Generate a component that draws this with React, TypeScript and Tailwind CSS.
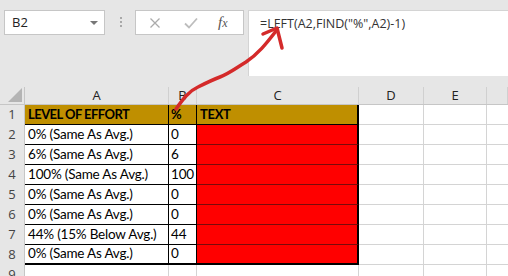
import React from "react";

const rows: { n: number; a: string; b: string }[] = [
  { n: 2, a: "0% (Same As Avg.)", b: "0" },
  { n: 3, a: "6% (Same As Avg.)", b: "6" },
  { n: 4, a: "100% (Same As Avg.)", b: "100" },
  { n: 5, a: "0% (Same As Avg.)", b: "0" },
  { n: 6, a: "0% (Same As Avg.)", b: "0" },
  { n: 7, a: "44% (15% Below Avg.)", b: "44" },
  { n: 8, a: "0% (Same As Avg.)", b: "0" },
];

const cellFont = { fontFamily: "Lato, 'Liberation Sans', sans-serif" };

function RowHeader({ n }: { n: number | string }) {
  return (
    <div
      className="w-[25px] h-[20px] shrink-0 flex items-center justify-center text-[13px] text-[#444] border-r border-[#c6c6c6]"
      style={{ fontFamily: "'Open Sans', sans-serif" }}
    >
      {n}
    </div>
  );
}

export default function App() {
  return (
    <div className="relative w-[508px] h-[276px] overflow-hidden bg-[#e6e6e6]">
      {/* toolbar */}
      <div className="flex items-start h-[87px] pt-[10px]">
        <div
          className="ml-[4px] w-[101px] h-[25px] bg-white border border-[#c6c6c6] flex items-center justify-between pl-[7px] pr-[6px] text-[13px] text-[#222]"
          style={{ fontFamily: "'Open Sans', sans-serif" }}
        >
          <span>B2</span>
          <span className="w-0 h-0 border-l-[4px] border-r-[4px] border-t-[4px] border-l-transparent border-r-transparent border-t-[#777]" />
        </div>
        <div className="ml-[15px] mt-[7px] flex flex-col gap-[2px]">
          <span className="w-[2px] h-[2px] bg-[#a8a8a8]" />
          <span className="w-[2px] h-[2px] bg-[#a8a8a8]" />
          <span className="w-[2px] h-[2px] bg-[#a8a8a8]" />
        </div>
        <div className="ml-[13px] w-[109px] h-[25px] bg-white border border-[#c6c6c6] flex items-center">
          <svg width="12" height="12" viewBox="0 0 12 12" className="ml-[13px]">
            <path d="M1.5 1.5 L10.5 10.5 M10.5 1.5 L1.5 10.5" stroke="#ababab" strokeWidth="1.3" fill="none" />
          </svg>
          <svg width="14" height="12" viewBox="0 0 14 12" className="ml-[23px]">
            <path d="M1 6.5 L5 10.5 L13 1.5" stroke="#bdbdbd" strokeWidth="1.8" fill="none" />
          </svg>
          <span
            className="ml-[20px] italic text-[15px] text-[#555] leading-none"
            style={{ fontFamily: "'Liberation Serif', serif" }}
          >
            f<span className="text-[12px]">x</span>
          </span>
        </div>
        <div
          className="ml-[4px] flex-1 h-[66px] bg-white border-l border-t border-[#d4d4d4] pl-[11px] pt-[4px] text-[12.5px] text-[#333]"
          style={{ fontFamily: "'Open Sans', sans-serif" }}
        >
          =LEFT(A2,FIND("%",A2)-1)
        </div>
      </div>

      {/* column headers */}
      <div className="flex h-[18px] border-b border-[#c6c6c6]" style={{ fontFamily: "'Open Sans', sans-serif" }}>
        <div className="w-[25px] shrink-0 border-r border-[#c6c6c6] flex items-end justify-end pr-[2px] pb-[2px]">
          <svg width="14" height="14" viewBox="0 0 14 14">
            <polygon points="14,0 14,14 0,14" fill="#b4b4b4" />
          </svg>
        </div>
        {[
          ["A", "w-[144px]"],
          ["B", "w-[28px]"],
          ["C", "w-[162px]"],
          ["D", "w-[65px]"],
          ["E", "w-[63px]"],
          ["", "w-[21px]"],
        ].map(([l, w], i) => (
          <div
            key={i}
            className={`${w} shrink-0 border-r border-[#d0d0d0] flex items-center justify-center text-[13px] text-[#222]`}
          >
            {l}
          </div>
        ))}
      </div>

      {/* row 1 */}
      <div className="flex h-[20px]">
        <RowHeader n={1} />
        <div className="flex bg-white" style={cellFont}>
          <div className="w-[144px] h-[20px] bg-[#bf8f00] border-r border-b border-black flex items-end pl-[3px] pb-[1px] font-bold text-[13px] tracking-[-0.55px] text-black leading-[17px] whitespace-nowrap">
            LEVEL OF EFFORT
          </div>
          <div className="w-[28px] h-[20px] bg-[#bf8f00] border-r border-b border-black flex items-end pl-[2px] pb-[1px] font-bold text-[13px] text-black leading-[17px]">
            %
          </div>
          <div className="w-[162px] h-[20px] bg-[#bf8f00] border-r-2 border-b border-black flex items-end pl-[3px] pb-[1px] font-bold text-[13px] tracking-[-0.3px] text-black leading-[17px]">
            TEXT
          </div>
          <div className="w-[65px] h-[20px] border-r border-b border-[#d4d4d4]" />
          <div className="w-[63px] h-[20px] border-r border-b border-[#d4d4d4]" />
          <div className="w-[21px] h-[20px] border-b border-[#d4d4d4]" />
        </div>
      </div>

      {rows.map((r) => {
        const last = r.n === 8;
        const hb = last ? "border-b-2" : "border-b";
        return (
          <div key={r.n} className="flex h-[20px]">
            <RowHeader n={r.n} />
            <div className="flex bg-white" style={cellFont}>
              <div className={`w-[144px] h-[20px] border-r ${hb} border-black flex items-end pl-[3px] pb-[1px] text-[13.5px] tracking-[-0.2px] text-black leading-[17px] whitespace-nowrap`}>
                {r.a}
              </div>
              <div className={`w-[28px] h-[20px] border-r ${hb} border-black flex items-end pl-[2px] pb-[1px] text-[13.5px] tracking-[-0.2px] text-black leading-[17px] whitespace-nowrap`}>
                {r.b}
              </div>
              <div
                className={`w-[162px] h-[20px] bg-[#ff0000] border-r-2 border-r-black ${hb} ${last ? "border-b-black" : "border-b-[#7a0a0a]"}`}
              />
              <div className="w-[65px] h-[20px] border-r border-b border-[#d4d4d4]" />
              <div className="w-[63px] h-[20px] border-r border-b border-[#d4d4d4]" />
              <div className="w-[21px] h-[20px] border-b border-[#d4d4d4]" />
            </div>
          </div>
        );
      })}

      {/* row 9 partial */}
      <div className="flex h-[20px]">
        <RowHeader n={9} />
        <div className="flex bg-white">
          <div className="w-[144px] h-[20px] border-r border-[#d4d4d4]" />
          <div className="w-[28px] h-[20px] border-r border-[#d4d4d4]" />
          <div className="w-[162px] h-[20px] border-r border-[#d4d4d4]" />
          <div className="w-[65px] h-[20px] border-r border-[#d4d4d4]" />
          <div className="w-[63px] h-[20px] border-r border-[#d4d4d4]" />
          <div className="w-[21px] h-[20px]" />
        </div>
      </div>

      {/* red hand-drawn arrow */}
      <svg className="absolute left-0 top-0 pointer-events-none" width="508" height="276" viewBox="0 0 508 276">
        <path
          d="M176 109 C183 99 189 91 198 87 C206 83 212 80 220 77 C230 73 236 68 246 62 C258 54 266 44 276 31"
          stroke="#d42a2a"
          strokeWidth="3.5"
          fill="none"
          strokeLinecap="round"
          strokeLinejoin="round"
        />
        <path
          d="M263 34 L277 28 L282 48"
          stroke="#d42a2a"
          strokeWidth="3.5"
          fill="none"
          strokeLinecap="round"
          strokeLinejoin="round"
        />
      </svg>
    </div>
  );
}
